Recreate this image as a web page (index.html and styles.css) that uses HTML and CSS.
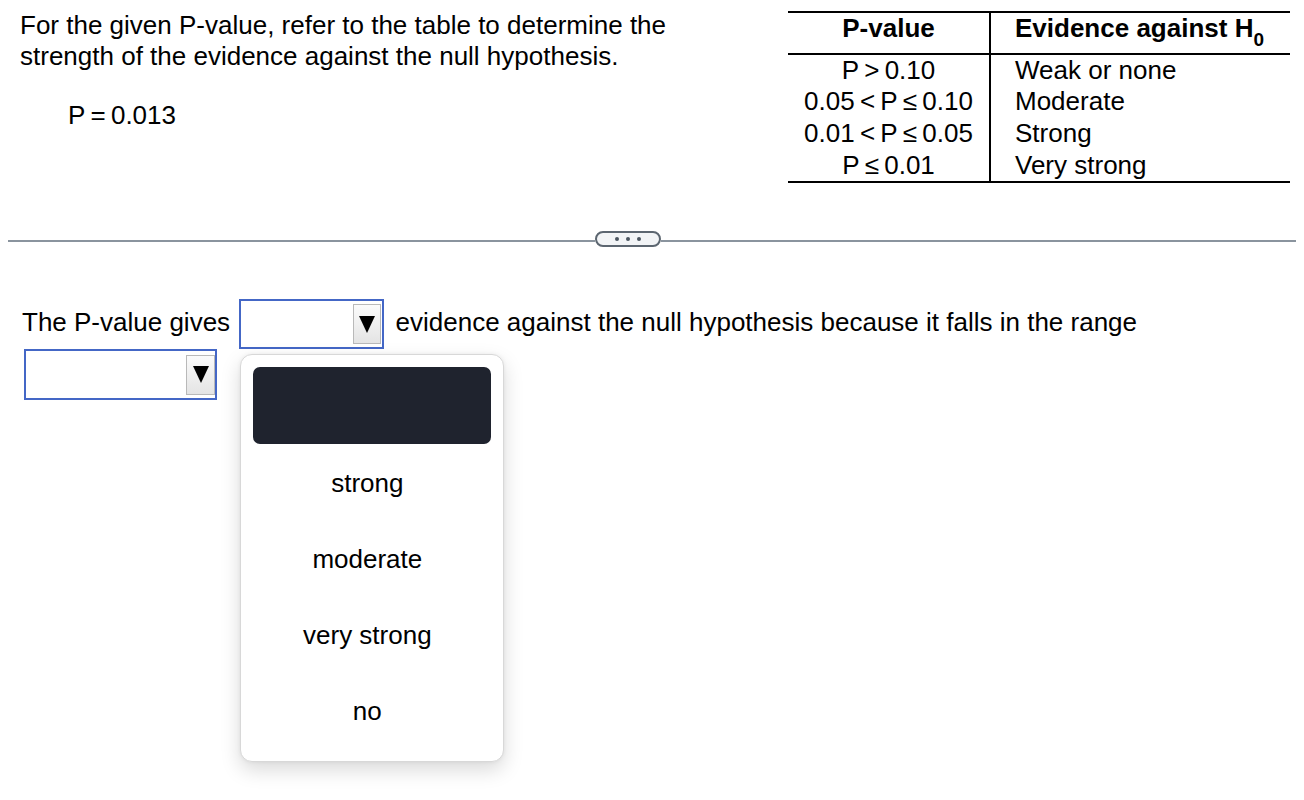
FILE: index.html
```html
<!DOCTYPE html>
<html lang="en">
<head>
<meta charset="utf-8">
<title>P-value evidence</title>
<link rel="stylesheet" href="styles.css">
</head>
<body>
<div class="top">
  <div class="question">
    <p class="q-text">For the given P-value, refer to the table to determine the strength of the evidence against the null hypothesis.</p>
    <p class="q-value">P&#8201;=&#8201;0.013</p>
  </div>
  <table class="evidence">
    <thead>
      <tr>
        <th class="c1">P-value</th>
        <th class="c2">Evidence against H<sub>0</sub></th>
      </tr>
    </thead>
    <tbody>
      <tr><td class="c1">P&#8201;&gt;&#8201;0.10</td><td class="c2">Weak or none</td></tr>
      <tr><td class="c1">0.05&#8201;&lt;&#8201;P&#8201;≤&#8201;0.10</td><td class="c2">Moderate</td></tr>
      <tr><td class="c1">0.01&#8201;&lt;&#8201;P&#8201;≤&#8201;0.05</td><td class="c2">Strong</td></tr>
      <tr><td class="c1">P&#8201;≤&#8201;0.01</td><td class="c2">Very strong</td></tr>
    </tbody>
  </table>
</div>

<div class="sep">
  <span class="sep-line sep-left"></span>
  <span class="pill"><i></i><i></i><i></i></span>
  <span class="sep-line sep-right"></span>
</div>

<p class="answer">The P-value gives <span class="dd"><span class="sel sel-1"><span class="btn"><svg width="16" height="17" viewBox="0 0 16 17"><polygon points="0,0 16,0 8,17" fill="#000"/></svg></span></span><span class="menu">
      <span class="opt opt-blank"></span>
      <span class="opt">strong</span>
      <span class="opt">moderate</span>
      <span class="opt">very strong</span>
      <span class="opt">no</span>
    </span></span> evidence against the null hypothesis because it falls in the range <span class="sel sel-2"><span class="btn"><svg width="16" height="17" viewBox="0 0 16 17"><polygon points="0,0 16,0 8,17" fill="#000"/></svg></span></span></p>
</body>
</html>
```

FILE: styles.css
```css
html {
  margin: 0;
  padding: 0;
  min-height: 100%;
  background: #ffffff;
}
body {
  margin: 8px;
  min-height: 784px;
  font-family: "Liberation Sans", Arial, sans-serif;
  font-size: 26px;
  color: #000;
}

.top {
  display: flex;
  justify-content: space-between;
  align-items: flex-start;
  padding: 0 6px 0 12px;
}
.question {
  padding-top: 2px;
}
.q-text {
  margin: 0;
  width: 660px;
  line-height: 31px;
}
.q-value {
  margin: 28px 0 0 48px;
  line-height: 31px;
}

.evidence {
  margin-top: 3px;
  border-collapse: collapse;
  border-top: 2px solid #000;
  border-bottom: 2px solid #000;
  width: 502px;
}
.evidence th,
.evidence td {
  padding: 0;
  vertical-align: top;
}
.evidence th {
  line-height: 29px;
  padding-top: 1px;
  padding-bottom: 10px;
  border-bottom: 2px solid #000;
  font-weight: bold;
}
.evidence td {
  line-height: 28px;
  height: 32px;
  padding-top: 1px;
  box-sizing: border-box;
}
.evidence .c1 {
  width: 201px;
  text-align: center;
  border-right: 2px solid #000;
  white-space: nowrap;
}
.evidence .c2 {
  text-align: left;
  padding-left: 24px;
}
.evidence sub {
  font-size: 19px;
  line-height: 0;
  vertical-align: -9px;
}

.sep {
  display: flex;
  align-items: flex-start;
  margin: 48px -6px 0 0;
  height: 16px;
}
.sep-line {
  height: 2px;
  margin-top: 9px;
  background: #8a949e;
}
.sep-left {
  width: 587px;
  flex: none;
}
.sep-right {
  flex: 1;
}
.pill {
  flex: none;
  box-sizing: border-box;
  width: 66px;
  height: 16px;
  border: 2px solid #5c6670;
  border-radius: 8px;
  background: #f2f4f6;
  display: flex;
  align-items: center;
  justify-content: center;
  gap: 7px;
}
.pill i {
  width: 4px;
  height: 4px;
  border-radius: 50%;
  background: #4b5560;
}

.answer {
  margin: 52px 0 0 0;
  padding-left: 14px;
  line-height: 30px;
}
.dd {
  position: relative;
  display: inline-block;
  vertical-align: middle;
  margin: 0 4px 0 2px;
}
.sel {
  display: inline-flex;
  justify-content: flex-end;
  align-items: center;
  box-sizing: border-box;
  height: 50px;
  border: 2px solid #4467c6;
  background: #fff;
  vertical-align: middle;
  padding-right: 1px;
}
.sel-1 {
  width: 145px;
  vertical-align: top;
}
.sel-2 {
  width: 193px;
  margin-left: 2px;
  padding-right: 0;
  height: 51px;
}
.btn {
  box-sizing: border-box;
  width: 28px;
  height: 40px;
  border: 1px solid #b9b9b9;
  background: linear-gradient(#fbfbfb, #e4e4e4);
  display: flex;
  align-items: center;
  justify-content: center;
}
.sel-2 .btn {
  width: 29px;
}
.btn svg {
  display: block;
}

.menu {
  position: absolute;
  left: 1px;
  top: 55px;
  width: 264px;
  box-sizing: border-box;
  padding: 12px 12px 12px 12px;
  background: #fff;
  border: 1px solid #d8d8d8;
  border-radius: 12px;
  box-shadow: 0 8px 20px rgba(0, 0, 0, 0.15), 0 0 4px rgba(0, 0, 0, 0.06);
  display: flex;
  flex-direction: column;
  z-index: 5;
}
.opt {
  display: flex;
  align-items: center;
  justify-content: center;
  height: 76px;
  padding-right: 10px;
  line-height: 30px;
  white-space: nowrap;
}
.opt-blank {
  height: 77px;
  margin-bottom: 1px;
  background: #1f232e;
  border-radius: 7px;
  padding-right: 0;
}
```
